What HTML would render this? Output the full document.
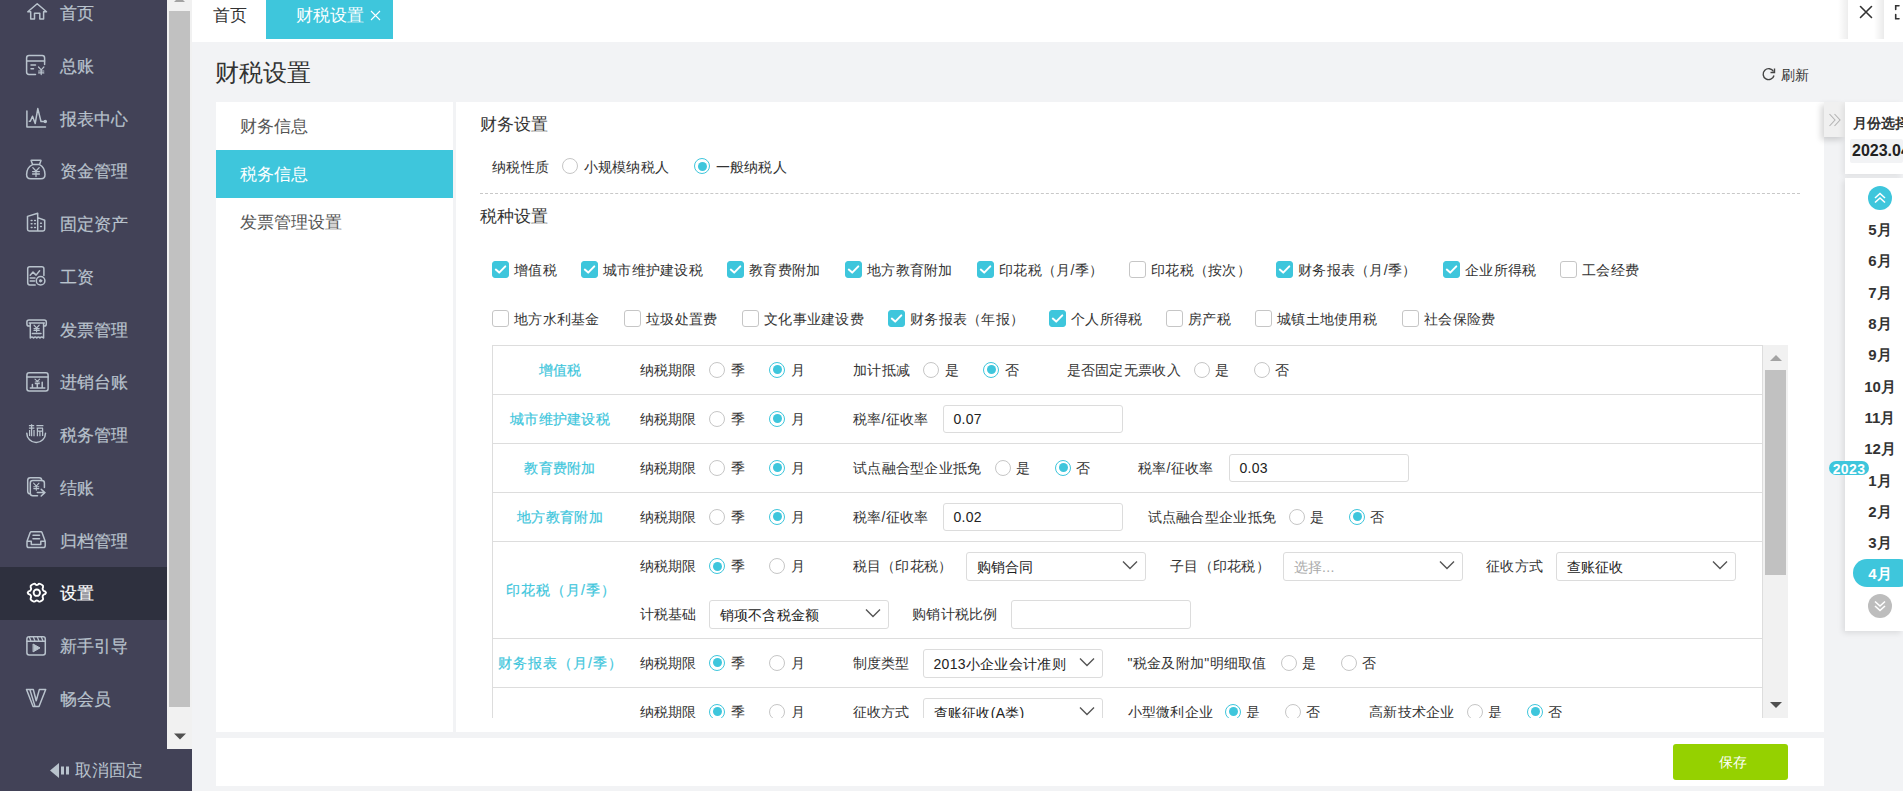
<!DOCTYPE html>
<html><head><meta charset="utf-8">
<style>
*{box-sizing:border-box;margin:0;padding:0}
html,body{width:1903px;height:791px;overflow:hidden;background:#f2f3f5;font-family:"Liberation Sans",sans-serif;color:#333}
.a{position:absolute}
.t{position:absolute;white-space:nowrap;line-height:20px}
.ls{letter-spacing:0.3px}
.sk{-webkit-text-stroke:0.2px currentColor}
#side{left:0;top:0;width:167px;height:791px;background:#424257;overflow:hidden}
.si{position:absolute;left:0;width:167px;height:53px}
.si .lb{position:absolute;left:60px;top:0;line-height:53px;font-size:17px;color:#b9c3cd;white-space:nowrap;-webkit-text-stroke:0.2px currentColor}
.si svg{position:absolute;left:26px;top:16px;width:21px;height:21px}
.si.on{background:#2e303e}
.si.on .lb{color:#fff}
.rd{position:absolute;width:16px;height:16px;border:1px solid #c6c6c6;border-radius:50%;background:#fff}
.rd.on{border-color:#3ec6dc}
.rd.on:after{content:"";position:absolute;left:2.5px;top:2.5px;width:9px;height:9px;border-radius:50%;background:#3ec6dc}
.cb{position:absolute;width:17px;height:17px;border:1px solid #c6c6c6;border-radius:3px;background:#fff}
.cb.on{background:#3ec6dc;border-color:#3ec6dc}
.cb svg{position:absolute;left:-1px;top:-1px}
.ib{position:absolute;border:1px solid #dcdcdc;border-radius:3px;background:#fff}
</style></head><body>
<div id="side" class="a">
<div class="si" style="top:-13.00px"><span class="lb">首页</span></div>
<div class="si" style="top:39.76px"><span class="lb">总账</span></div>
<div class="si" style="top:92.52px"><span class="lb">报表中心</span></div>
<div class="si" style="top:145.28px"><span class="lb">资金管理</span></div>
<div class="si" style="top:198.04px"><span class="lb">固定资产</span></div>
<div class="si" style="top:250.80px"><span class="lb">工资</span></div>
<div class="si" style="top:303.56px"><span class="lb">发票管理</span></div>
<div class="si" style="top:356.32px"><span class="lb">进销台账</span></div>
<div class="si" style="top:409.08px"><span class="lb">税务管理</span></div>
<div class="si" style="top:461.84px"><span class="lb">结账</span></div>
<div class="si" style="top:514.60px"><span class="lb">归档管理</span></div>
<div class="si on" style="top:567.36px"><span class="lb">设置</span></div>
<div class="si" style="top:620.12px"><span class="lb">新手引导</span></div>
<div class="si" style="top:672.88px"><span class="lb">畅会员</span></div>
</div>
<svg class="a" style="left:0;top:0" width="60" height="791" viewBox="0 0 60 791" fill="none" stroke="#b9c3cd" stroke-width="1.5" stroke-linejoin="round" stroke-linecap="round">
<!-- home -->
<path d="M37.2 3.8 L27.8 11.8 H30.7 V19 H34.5 V13.3 H39.8 V19 H43.6 V11.8 H46.5 Z"/>
<!-- ledger -->
<path d="M44.6 64.5 V58 Q44.6 55.6 42.2 55.6 H29 Q26.6 55.6 26.6 58 V72 Q26.6 74.4 29 74.4 H35.5"/>
<path d="M26.6 61 H44.6 M31 65 H35.5 M31 68.8 H33.5"/>
<path d="M38.5 67 L41.2 69.8 L43.9 67 M41.2 69.8 V74.6 M38.6 71 H43.8 M38.6 72.9 H43.8" stroke-width="1.2"/>
<!-- chart -->
<path d="M26.9 111 V126.9 H45.5"/>
<path d="M29.3 121.2 H30.3 L32.5 116.3 L35.2 123.5 L37.8 108.6 L41 121.5 H45"/>
<circle cx="45.3" cy="121.6" r="1" fill="#b9c3cd"/>
<!-- money bag -->
<path d="M32.6 164.6 L31.2 160.8 Q31 160.2 31.7 160.2 H40.4 Q41.1 160.2 40.9 160.8 L39.5 164.6 Q45 167.5 45 174.5 Q45 178.8 41 178.8 H30.6 Q26.6 178.8 26.6 174.5 Q26.6 167.5 32.6 164.6 Z M32.6 164.6 H39.5"/>
<path d="M32.8 167.6 L36 171 L39.2 167.6 M36 171 V176.6 M32.6 171.6 H39.4 M32.6 174 H39.4" stroke-width="1.3"/>
<!-- building -->
<path d="M37.7 213.2 L27.5 216.4 V229.3 Q27.5 231 29.2 231 H43 Q44.7 231 44.7 229.3 V220.2 L37.7 217.6 M37.7 213.2 V231"/>
<path d="M31.2 220.4 H32 M34.6 220.4 H35.4 M31.2 223.8 H32 M34.6 223.8 H35.4 M31.2 227.4 H32 M34.6 227.4 H35.4 M40.6 223.2 H41.4 M40.6 226.4 H41.4" stroke-width="1.5"/>
<!-- salary -->
<path d="M43.9 275.6 V268.8 Q43.9 266.7 41.8 266.7 H29.8 Q27.7 266.7 27.7 268.8 V282.8 Q27.7 284.9 29.8 284.9 H35.2"/>
<path d="M30.2 275.2 L33 272.1 L36.1 275.1 L39.6 270.8 M30.2 278 H35 M30.2 281 H34.5"/>
<circle cx="40.6" cy="280.8" r="4.3"/>
<circle cx="40.6" cy="280.8" r="1.2" fill="#b9c3cd" stroke-width="1"/>
<!-- invoice -->
<path d="M30.3 326 H29 Q26.9 326 26.9 323.9 V322 Q26.9 319.9 29 319.9 H44.2 Q46.3 319.9 46.3 322 V323.9 Q46.3 326 44.2 326 H43.6"/>
<path d="M29.3 323.1 H44.3 M30.3 323.1 V338 Q32 335.8 33.6 338 Q35.2 335.8 36.8 338 Q38.4 335.8 40 338 Q41.6 335.8 43.6 338 V323.1 M32.4 333.5 H41"/>
<path d="M34 325.2 L36.6 328 L39.2 325.2 M36.6 328 V331.8 M34 328.6 H39.2 M34 330.4 H39.2" stroke-width="1.2"/>
<!-- window chart -->
<rect x="26.9" y="372.7" width="21.2" height="18.2" rx="2.2"/>
<path d="M26.9 377 H48.1 M30.3 387.9 H44.8 M32.4 384.6 V387.9 M37.3 384 V387.9 M42.2 382.2 V387.9"/>
<path d="M35 379.2 L37.3 381.4 L39.6 379.2 M35.2 382 H39.4 M35.2 383.6 H39.4" stroke-width="1.1"/>
<!-- tax bowl -->
<path d="M26.8 433.2 A9.35 9.35 0 0 0 45.5 433.2"/>
<path d="M28.9 425.6 H34.2 M36.4 425.6 H43.4 M28.9 428.2 H34.4 M36.6 428.2 H43 M31.6 424.3 V436.3 M29.6 430 V436 M34 430 V436.3 M37.4 428.2 V436.3 M39.9 430.6 V436.3 M42.6 428.2 V436 M37.4 431 H42.6" stroke-width="1.25" stroke-linecap="butt"/>
<!-- checkout -->
<path d="M30.3 493.8 Q27.7 493.8 27.7 491.2 V480.3 Q27.7 477.7 30.3 477.7 H39.2 Q41.7 477.7 41.7 480.4"/>
<path d="M44.4 487.6 V483 Q44.4 480.5 41.9 480.5 H32.8 Q30.3 480.5 30.3 483 V493.2 Q30.3 495.7 32.8 495.7 H37.5"/>
<path d="M37.3 492.6 H45 M41.2 489.2 L44.8 492.6 L41.2 496"/>
<path d="M33.6 483.2 L36.3 486.2 L39 483.2 M36.3 486.2 V490.2 M33.8 486.8 H38.8 M33.8 488.6 H38.8" stroke-width="1.1"/>
<!-- inbox -->
<path d="M31.4 531.8 H41 Q41.7 531.8 42 532.5 L45.2 541.3 V545.8 Q45.2 547.6 43.4 547.6 H28.8 Q27 547.6 27 545.8 V541.3 L30.2 532.5 Q30.6 531.8 31.4 531.8 Z M27 541.3 H31.3 V544.5 H40.8 V541.3 H45.2 M33 535.2 H39.5 M33 538.8 H39.5"/>
<!-- gear (white) -->
<path d="M33.3 584 Q34.9 583.3 35.5 584.4 Q36.8 585.4 38.1 584.4 Q38.8 583.3 40.4 584 Q42.3 584.9 43 585.9 Q43.3 587.5 42.6 588.3 Q42.4 590 43.7 590.9 Q45.6 591.2 46 592.7 Q45.6 594.2 43.7 594.6 Q42.4 595.4 42.6 597.1 Q43.3 598 43 599.5 Q42.3 600.6 40.4 601.4 Q38.8 602 38.1 601 Q36.8 600 35.5 601 Q34.9 602 33.3 601.4 Q31.4 600.6 30.7 599.5 Q30.4 598 31.1 597.1 Q31.3 595.4 30 594.6 Q28 594.2 27.7 592.7 Q28 591.2 30 590.9 Q31.3 590 31.1 588.3 Q30.4 587.5 30.7 585.9 Q31.4 584.9 33.3 584 Z" stroke="#fff" stroke-width="1.9"/>
<circle cx="36.8" cy="592.7" r="3.2" stroke="#fff" stroke-width="1.9"/>
<!-- clapper -->
<rect x="26.9" y="636.7" width="18.4" height="18.2" rx="2.2"/>
<path d="M26.9 641.2 H45.3"/>
<path d="M29.5 637.5 L30.8 640.5 M33.5 637.5 L34.8 640.5 M37.5 637.5 L38.8 640.5 M41.5 637.5 L42.8 640.5" stroke-width="1.3"/>
<path d="M33.4 644.2 L40 647.9 L33.4 651.7 Z" fill="#b9c3cd" stroke-width="1"/>
<!-- V -->
<path d="M26.5 689.4 H33.3 L36.2 700.8 L39.4 689.4 H45.7 L39 706.4 H33.1 Z M29.8 689.4 L34.8 705.6"/>
</svg>
<div class="a" style="left:167px;top:0px;width:25px;height:749px;background:#f1f1f1;"></div>
<div class="a" style="left:169px;top:11px;width:21px;height:696px;background:#c1c1c1;"></div>
<svg class="a" style="left:173px;top:-4px" width="14" height="6" viewBox="0 0 14 6"><path d="M1 6 L6.5 0.5 L12 6 Z" fill="#a3a3a3"/></svg>
<svg class="a" style="left:173.5px;top:733px" width="12" height="7" viewBox="0 0 12 7"><path d="M0 0.5 L6 6.5 L12 0.5 Z" fill="#505050"/></svg>
<div class="a" style="left:0px;top:749px;width:192px;height:42px;background:#424257;"></div>
<svg class="a" style="left:49px;top:762px" width="24" height="17" viewBox="0 0 24 17"><path d="M1 8.5 L10 1 V16 Z" fill="#b9c3cd"/><rect x="12" y="4.5" width="3" height="8" fill="#b9c3cd"/><rect x="17" y="4.5" width="3" height="8" fill="#b9c3cd"/></svg>
<div class="t" style="left:74.5px;top:761.0px;font-size:17px;line-height:20px;color:#b9c3cd;font-weight:normal;">取消固定</div>
<div class="a" style="left:192px;top:0px;width:1711px;height:42px;background:#fff;"></div>
<div class="t" style="left:213px;top:6.0px;font-size:17px;line-height:20px;color:#333;font-weight:normal;">首页</div>
<div class="a" style="left:266px;top:0px;width:127px;height:39px;background:#3ec6dc;"></div>
<div class="t" style="left:296px;top:6.0px;font-size:17px;line-height:20px;color:#fff;font-weight:normal;">财税设置</div>
<svg class="a" style="left:369.5px;top:10px" width="11" height="11" viewBox="0 0 11 11"><path d="M1 1 L10 10 M10 1 L1 10" stroke="#fff" stroke-width="1.1"/></svg>
<div class="a" style="left:1838px;top:0px;width:10px;height:39px;background:linear-gradient(to right, rgba(0,0,0,0), rgba(0,0,0,0.07));"></div>
<div class="a" style="left:1874px;top:0px;width:10px;height:39px;background:linear-gradient(to right, rgba(0,0,0,0), rgba(0,0,0,0.08));"></div>
<svg class="a" style="left:1859px;top:5px" width="14" height="14" viewBox="0 0 14 14"><path d="M1.5 1.5 L12.5 12.5 M12.5 1.5 L1.5 12.5" stroke="#333" stroke-width="1.6" stroke-linecap="round"/></svg>
<svg class="a" style="left:1893px;top:4px" width="10" height="17" viewBox="0 0 10 17"><path d="M6 1.7 H2.7 V5.5 M2.7 10.5 V14.8 H6" fill="none" stroke="#333" stroke-width="1.6" stroke-linecap="round"/></svg>
<div class="t" style="left:215px;top:57.5px;font-size:24px;line-height:30px;color:#333;font-weight:normal;">财税设置</div>
<svg class="a" style="left:1761px;top:67px" width="15" height="15" viewBox="0 0 15 15"><path d="M12.5 4.5 A5.5 5.5 0 1 0 13 8.5" fill="none" stroke="#444" stroke-width="1.4"/><path d="M13.5 1.5 V5.5 H9.5" fill="none" stroke="#444" stroke-width="1.4"/></svg>
<div class="t ls" style="left:1781px;top:64.5px;font-size:14px;line-height:20px;color:#333;font-weight:normal;">刷新</div>
<div class="a" style="left:216px;top:102px;width:237px;height:630px;background:#fff;"></div>
<div class="a" style="left:216px;top:150px;width:237px;height:48px;background:#3ec6dc;"></div>
<div class="t" style="left:240px;top:117.0px;font-size:17px;line-height:20px;color:#555;font-weight:normal;">财务信息</div>
<div class="t" style="left:240px;top:165.0px;font-size:17px;line-height:20px;color:#fff;font-weight:normal;">税务信息</div>
<div class="t" style="left:240px;top:213.0px;font-size:17px;line-height:20px;color:#555;font-weight:normal;">发票管理设置</div>
<div class="a" style="left:456px;top:102px;width:1368px;height:630px;background:#fff;"></div>
<div class="t" style="left:480px;top:114.5px;font-size:17px;line-height:20px;color:#333;font-weight:normal;">财务设置</div>
<div class="t ls" style="left:492px;top:157.0px;font-size:14px;line-height:20px;color:#333;font-weight:normal;">纳税性质</div>
<div class="rd" style="left:562px;top:158.0px"></div>
<div class="t ls" style="left:583.5px;top:156.5px;font-size:14px;line-height:20px;color:#333;font-weight:normal;">小规模纳税人</div>
<div class="rd on" style="left:694px;top:158.0px"></div>
<div class="t ls" style="left:715.5px;top:156.5px;font-size:14px;line-height:20px;color:#333;font-weight:normal;">一般纳税人</div>
<div class="a" style="left:480px;top:193px;width:1320px;height:0;border-top:1px dashed #c8c8c8"></div>
<div class="t" style="left:480px;top:206.5px;font-size:17px;line-height:20px;color:#333;font-weight:normal;">税种设置</div>
<div class="cb on" style="left:492px;top:261px"><svg width="17" height="17" viewBox="0 0 17 17"><path d="M3.8 8.6 L7.2 11.6 L13.3 5.4" fill="none" stroke="#fff" stroke-width="2" stroke-linecap="round" stroke-linejoin="round"/></svg></div>
<div class="t ls" style="left:514px;top:259.5px;font-size:14px;line-height:20px;color:#333;font-weight:normal;">增值税</div>
<div class="cb on" style="left:581px;top:261px"><svg width="17" height="17" viewBox="0 0 17 17"><path d="M3.8 8.6 L7.2 11.6 L13.3 5.4" fill="none" stroke="#fff" stroke-width="2" stroke-linecap="round" stroke-linejoin="round"/></svg></div>
<div class="t ls" style="left:603px;top:259.5px;font-size:14px;line-height:20px;color:#333;font-weight:normal;">城市维护建设税</div>
<div class="cb on" style="left:727px;top:261px"><svg width="17" height="17" viewBox="0 0 17 17"><path d="M3.8 8.6 L7.2 11.6 L13.3 5.4" fill="none" stroke="#fff" stroke-width="2" stroke-linecap="round" stroke-linejoin="round"/></svg></div>
<div class="t ls" style="left:749px;top:259.5px;font-size:14px;line-height:20px;color:#333;font-weight:normal;">教育费附加</div>
<div class="cb on" style="left:845px;top:261px"><svg width="17" height="17" viewBox="0 0 17 17"><path d="M3.8 8.6 L7.2 11.6 L13.3 5.4" fill="none" stroke="#fff" stroke-width="2" stroke-linecap="round" stroke-linejoin="round"/></svg></div>
<div class="t ls" style="left:867px;top:259.5px;font-size:14px;line-height:20px;color:#333;font-weight:normal;">地方教育附加</div>
<div class="cb on" style="left:977px;top:261px"><svg width="17" height="17" viewBox="0 0 17 17"><path d="M3.8 8.6 L7.2 11.6 L13.3 5.4" fill="none" stroke="#fff" stroke-width="2" stroke-linecap="round" stroke-linejoin="round"/></svg></div>
<div class="t ls" style="left:999px;top:259.5px;font-size:14px;line-height:20px;color:#333;font-weight:normal;">印花税（月/季）</div>
<div class="cb" style="left:1129px;top:261px"></div>
<div class="t ls" style="left:1151px;top:259.5px;font-size:14px;line-height:20px;color:#333;font-weight:normal;">印花税（按次）</div>
<div class="cb on" style="left:1276px;top:261px"><svg width="17" height="17" viewBox="0 0 17 17"><path d="M3.8 8.6 L7.2 11.6 L13.3 5.4" fill="none" stroke="#fff" stroke-width="2" stroke-linecap="round" stroke-linejoin="round"/></svg></div>
<div class="t ls" style="left:1298px;top:259.5px;font-size:14px;line-height:20px;color:#333;font-weight:normal;">财务报表（月/季）</div>
<div class="cb on" style="left:1443px;top:261px"><svg width="17" height="17" viewBox="0 0 17 17"><path d="M3.8 8.6 L7.2 11.6 L13.3 5.4" fill="none" stroke="#fff" stroke-width="2" stroke-linecap="round" stroke-linejoin="round"/></svg></div>
<div class="t ls" style="left:1465px;top:259.5px;font-size:14px;line-height:20px;color:#333;font-weight:normal;">企业所得税</div>
<div class="cb" style="left:1560px;top:261px"></div>
<div class="t ls" style="left:1582px;top:259.5px;font-size:14px;line-height:20px;color:#333;font-weight:normal;">工会经费</div>
<div class="cb" style="left:492px;top:310px"></div>
<div class="t ls" style="left:514px;top:308.5px;font-size:14px;line-height:20px;color:#333;font-weight:normal;">地方水利基金</div>
<div class="cb" style="left:624px;top:310px"></div>
<div class="t ls" style="left:646px;top:308.5px;font-size:14px;line-height:20px;color:#333;font-weight:normal;">垃圾处置费</div>
<div class="cb" style="left:742px;top:310px"></div>
<div class="t ls" style="left:764px;top:308.5px;font-size:14px;line-height:20px;color:#333;font-weight:normal;">文化事业建设费</div>
<div class="cb on" style="left:888px;top:310px"><svg width="17" height="17" viewBox="0 0 17 17"><path d="M3.8 8.6 L7.2 11.6 L13.3 5.4" fill="none" stroke="#fff" stroke-width="2" stroke-linecap="round" stroke-linejoin="round"/></svg></div>
<div class="t ls" style="left:910px;top:308.5px;font-size:14px;line-height:20px;color:#333;font-weight:normal;">财务报表（年报）</div>
<div class="cb on" style="left:1049px;top:310px"><svg width="17" height="17" viewBox="0 0 17 17"><path d="M3.8 8.6 L7.2 11.6 L13.3 5.4" fill="none" stroke="#fff" stroke-width="2" stroke-linecap="round" stroke-linejoin="round"/></svg></div>
<div class="t ls" style="left:1071px;top:308.5px;font-size:14px;line-height:20px;color:#333;font-weight:normal;">个人所得税</div>
<div class="cb" style="left:1166px;top:310px"></div>
<div class="t ls" style="left:1188px;top:308.5px;font-size:14px;line-height:20px;color:#333;font-weight:normal;">房产税</div>
<div class="cb" style="left:1255px;top:310px"></div>
<div class="t ls" style="left:1277px;top:308.5px;font-size:14px;line-height:20px;color:#333;font-weight:normal;">城镇土地使用税</div>
<div class="cb" style="left:1402px;top:310px"></div>
<div class="t ls" style="left:1424px;top:308.5px;font-size:14px;line-height:20px;color:#333;font-weight:normal;">社会保险费</div>
<div class="a" style="left:492px;top:345px;width:1296px;height:373px;overflow:hidden">
<div class="a" style="left:0;top:0;width:1271px;height:400px;border:1px solid #ddd;border-bottom:none"></div>
<div class="a" style="left:0;top:49px;width:1271px;height:1px;background:#ddd"></div>
<div class="a" style="left:0;top:98px;width:1271px;height:1px;background:#ddd"></div>
<div class="a" style="left:0;top:147px;width:1271px;height:1px;background:#ddd"></div>
<div class="a" style="left:0;top:196px;width:1271px;height:1px;background:#ddd"></div>
<div class="a" style="left:0;top:293px;width:1271px;height:1px;background:#ddd"></div>
<div class="a" style="left:0;top:342px;width:1271px;height:1px;background:#ddd"></div>
<div class="t ls sk" style="left:-82.0px;width:300px;text-align:center;top:14.5px;font-size:14px;line-height:20px;color:#3ec6dc;font-weight:normal;">增值税</div>
<div class="t ls" style="left:147.5px;top:14.5px;font-size:14px;line-height:20px;color:#333;font-weight:normal;">纳税期限</div>
<div class="rd" style="left:217px;top:16.5px"></div>
<div class="t ls" style="left:238.5px;top:14.5px;font-size:14px;line-height:20px;color:#333;font-weight:normal;">季</div>
<div class="rd on" style="left:277px;top:16.5px"></div>
<div class="t ls" style="left:298.5px;top:14.5px;font-size:14px;line-height:20px;color:#333;font-weight:normal;">月</div>
<div class="t ls" style="left:361px;top:14.5px;font-size:14px;line-height:20px;color:#333;font-weight:normal;">加计抵减</div>
<div class="rd" style="left:431px;top:16.5px"></div>
<div class="t ls" style="left:452.5px;top:14.5px;font-size:14px;line-height:20px;color:#333;font-weight:normal;">是</div>
<div class="rd on" style="left:491px;top:16.5px"></div>
<div class="t ls" style="left:512.5px;top:14.5px;font-size:14px;line-height:20px;color:#333;font-weight:normal;">否</div>
<div class="t ls" style="left:574.5px;top:14.5px;font-size:14px;line-height:20px;color:#333;font-weight:normal;">是否固定无票收入</div>
<div class="rd" style="left:702px;top:16.5px"></div>
<div class="t ls" style="left:723px;top:14.5px;font-size:14px;line-height:20px;color:#333;font-weight:normal;">是</div>
<div class="rd" style="left:762px;top:16.5px"></div>
<div class="t ls" style="left:783px;top:14.5px;font-size:14px;line-height:20px;color:#333;font-weight:normal;">否</div>
<div class="t ls sk" style="left:-82.0px;width:300px;text-align:center;top:63.5px;font-size:14px;line-height:20px;color:#3ec6dc;font-weight:normal;">城市维护建设税</div>
<div class="t ls" style="left:147.5px;top:63.5px;font-size:14px;line-height:20px;color:#333;font-weight:normal;">纳税期限</div>
<div class="rd" style="left:217px;top:65.5px"></div>
<div class="t ls" style="left:238.5px;top:63.5px;font-size:14px;line-height:20px;color:#333;font-weight:normal;">季</div>
<div class="rd on" style="left:277px;top:65.5px"></div>
<div class="t ls" style="left:298.5px;top:63.5px;font-size:14px;line-height:20px;color:#333;font-weight:normal;">月</div>
<div class="t ls" style="left:361px;top:63.5px;font-size:14px;line-height:20px;color:#333;font-weight:normal;">税率/征收率</div>
<div class="ib" style="left:451px;top:60px;width:180px;height:28px"></div>
<div class="t ls" style="left:461.5px;top:64.0px;font-size:14px;line-height:20px;color:#222;font-weight:normal;">0.07</div>
<div class="t ls sk" style="left:-82.0px;width:300px;text-align:center;top:112.5px;font-size:14px;line-height:20px;color:#3ec6dc;font-weight:normal;">教育费附加</div>
<div class="t ls" style="left:147.5px;top:112.5px;font-size:14px;line-height:20px;color:#333;font-weight:normal;">纳税期限</div>
<div class="rd" style="left:217px;top:114.5px"></div>
<div class="t ls" style="left:238.5px;top:112.5px;font-size:14px;line-height:20px;color:#333;font-weight:normal;">季</div>
<div class="rd on" style="left:277px;top:114.5px"></div>
<div class="t ls" style="left:298.5px;top:112.5px;font-size:14px;line-height:20px;color:#333;font-weight:normal;">月</div>
<div class="t ls" style="left:361px;top:112.5px;font-size:14px;line-height:20px;color:#333;font-weight:normal;">试点融合型企业抵免</div>
<div class="rd" style="left:503px;top:114.5px"></div>
<div class="t ls" style="left:524px;top:112.5px;font-size:14px;line-height:20px;color:#333;font-weight:normal;">是</div>
<div class="rd on" style="left:563px;top:114.5px"></div>
<div class="t ls" style="left:584px;top:112.5px;font-size:14px;line-height:20px;color:#333;font-weight:normal;">否</div>
<div class="t ls" style="left:646px;top:112.5px;font-size:14px;line-height:20px;color:#333;font-weight:normal;">税率/征收率</div>
<div class="ib" style="left:737px;top:109px;width:180px;height:28px"></div>
<div class="t ls" style="left:747.5px;top:113.0px;font-size:14px;line-height:20px;color:#222;font-weight:normal;">0.03</div>
<div class="t ls sk" style="left:-82.0px;width:300px;text-align:center;top:161.5px;font-size:14px;line-height:20px;color:#3ec6dc;font-weight:normal;">地方教育附加</div>
<div class="t ls" style="left:147.5px;top:161.5px;font-size:14px;line-height:20px;color:#333;font-weight:normal;">纳税期限</div>
<div class="rd" style="left:217px;top:163.5px"></div>
<div class="t ls" style="left:238.5px;top:161.5px;font-size:14px;line-height:20px;color:#333;font-weight:normal;">季</div>
<div class="rd on" style="left:277px;top:163.5px"></div>
<div class="t ls" style="left:298.5px;top:161.5px;font-size:14px;line-height:20px;color:#333;font-weight:normal;">月</div>
<div class="t ls" style="left:361px;top:161.5px;font-size:14px;line-height:20px;color:#333;font-weight:normal;">税率/征收率</div>
<div class="ib" style="left:451px;top:158px;width:180px;height:28px"></div>
<div class="t ls" style="left:461.5px;top:162.0px;font-size:14px;line-height:20px;color:#222;font-weight:normal;">0.02</div>
<div class="t ls" style="left:655.5px;top:161.5px;font-size:14px;line-height:20px;color:#333;font-weight:normal;">试点融合型企业抵免</div>
<div class="rd" style="left:797px;top:163.5px"></div>
<div class="t ls" style="left:818px;top:161.5px;font-size:14px;line-height:20px;color:#333;font-weight:normal;">是</div>
<div class="rd on" style="left:857px;top:163.5px"></div>
<div class="t ls" style="left:878px;top:161.5px;font-size:14px;line-height:20px;color:#333;font-weight:normal;">否</div>
<div class="t ls sk" style="left:-81.0px;width:300px;text-align:center;top:235.0px;font-size:14px;line-height:20px;color:#3ec6dc;font-weight:normal;letter-spacing:1px;">印花税（月/季）</div>
<div class="t ls" style="left:147.5px;top:211.0px;font-size:14px;line-height:20px;color:#333;font-weight:normal;">纳税期限</div>
<div class="rd on" style="left:217px;top:213.0px"></div>
<div class="t ls" style="left:238.5px;top:211.0px;font-size:14px;line-height:20px;color:#333;font-weight:normal;">季</div>
<div class="rd" style="left:277px;top:213.0px"></div>
<div class="t ls" style="left:298.5px;top:211.0px;font-size:14px;line-height:20px;color:#333;font-weight:normal;">月</div>
<div class="t ls" style="left:360.5px;top:211.0px;font-size:14px;line-height:20px;color:#333;font-weight:normal;">税目（印花税）</div>
<div class="ib" style="left:474px;top:207px;width:180px;height:29px"></div>
<div class="t ls" style="left:484.5px;top:211.5px;font-size:14px;line-height:20px;color:#222;font-weight:normal;">购销合同</div>
<svg class="a" style="left:630px;top:214.5px" width="16" height="10" viewBox="0 0 16 10"><path d="M1 1.5 L8 8.5 L15 1.5" fill="none" stroke="#555" stroke-width="1.4"/></svg>
<div class="t ls" style="left:678px;top:211.0px;font-size:14px;line-height:20px;color:#333;font-weight:normal;">子目（印花税）</div>
<div class="ib" style="left:791px;top:207px;width:180px;height:29px"></div>
<div class="t ls" style="left:801.5px;top:211.5px;font-size:14px;line-height:20px;color:#aaa;font-weight:normal;">选择...</div>
<svg class="a" style="left:947px;top:214.5px" width="16" height="10" viewBox="0 0 16 10"><path d="M1 1.5 L8 8.5 L15 1.5" fill="none" stroke="#555" stroke-width="1.4"/></svg>
<div class="t ls" style="left:994px;top:211.0px;font-size:14px;line-height:20px;color:#333;font-weight:normal;">征收方式</div>
<div class="ib" style="left:1064px;top:207px;width:180px;height:29px"></div>
<div class="t ls" style="left:1074.5px;top:211.5px;font-size:14px;line-height:20px;color:#222;font-weight:normal;">查账征收</div>
<svg class="a" style="left:1220px;top:214.5px" width="16" height="10" viewBox="0 0 16 10"><path d="M1 1.5 L8 8.5 L15 1.5" fill="none" stroke="#555" stroke-width="1.4"/></svg>
<div class="t ls" style="left:147.5px;top:259.0px;font-size:14px;line-height:20px;color:#333;font-weight:normal;">计税基础</div>
<div class="ib" style="left:217px;top:255px;width:180px;height:29px"></div>
<div class="t ls" style="left:227.5px;top:259.5px;font-size:14px;line-height:20px;color:#222;font-weight:normal;">销项不含税金额</div>
<svg class="a" style="left:373px;top:262.5px" width="16" height="10" viewBox="0 0 16 10"><path d="M1 1.5 L8 8.5 L15 1.5" fill="none" stroke="#555" stroke-width="1.4"/></svg>
<div class="t ls" style="left:420px;top:259.0px;font-size:14px;line-height:20px;color:#333;font-weight:normal;">购销计税比例</div>
<div class="ib" style="left:519px;top:255px;width:180px;height:29px"></div>
<div class="t ls sk" style="left:-81.5px;width:300px;text-align:center;top:307.5px;font-size:14px;line-height:20px;color:#3ec6dc;font-weight:normal;letter-spacing:1px;">财务报表（月/季）</div>
<div class="t ls" style="left:147.5px;top:307.5px;font-size:14px;line-height:20px;color:#333;font-weight:normal;">纳税期限</div>
<div class="rd on" style="left:217px;top:309.5px"></div>
<div class="t ls" style="left:238.5px;top:307.5px;font-size:14px;line-height:20px;color:#333;font-weight:normal;">季</div>
<div class="rd" style="left:277px;top:309.5px"></div>
<div class="t ls" style="left:298.5px;top:307.5px;font-size:14px;line-height:20px;color:#333;font-weight:normal;">月</div>
<div class="t ls" style="left:360.5px;top:307.5px;font-size:14px;line-height:20px;color:#333;font-weight:normal;">制度类型</div>
<div class="ib" style="left:431px;top:304px;width:180px;height:29px"></div>
<div class="t ls" style="left:441.5px;top:308.5px;font-size:14px;line-height:20px;color:#222;font-weight:normal;">2013小企业会计准则</div>
<svg class="a" style="left:587px;top:311.5px" width="16" height="10" viewBox="0 0 16 10"><path d="M1 1.5 L8 8.5 L15 1.5" fill="none" stroke="#555" stroke-width="1.4"/></svg>
<div class="t ls" style="left:635.5px;top:307.5px;font-size:14px;line-height:20px;color:#333;font-weight:normal;">"税金及附加"明细取值</div>
<div class="rd" style="left:789px;top:309.5px"></div>
<div class="t ls" style="left:810px;top:307.5px;font-size:14px;line-height:20px;color:#333;font-weight:normal;">是</div>
<div class="rd" style="left:849px;top:309.5px"></div>
<div class="t ls" style="left:870px;top:307.5px;font-size:14px;line-height:20px;color:#333;font-weight:normal;">否</div>
<div class="t ls" style="left:147.5px;top:356.5px;font-size:14px;line-height:20px;color:#333;font-weight:normal;">纳税期限</div>
<div class="rd on" style="left:217px;top:358.5px"></div>
<div class="t ls" style="left:238.5px;top:356.5px;font-size:14px;line-height:20px;color:#333;font-weight:normal;">季</div>
<div class="rd" style="left:277px;top:358.5px"></div>
<div class="t ls" style="left:298.5px;top:356.5px;font-size:14px;line-height:20px;color:#333;font-weight:normal;">月</div>
<div class="t ls" style="left:360.5px;top:356.5px;font-size:14px;line-height:20px;color:#333;font-weight:normal;">征收方式</div>
<div class="ib" style="left:431px;top:353px;width:180px;height:29px"></div>
<div class="t ls" style="left:441.5px;top:357.5px;font-size:14px;line-height:20px;color:#222;font-weight:normal;">查账征收(A类)</div>
<svg class="a" style="left:587px;top:360.5px" width="16" height="10" viewBox="0 0 16 10"><path d="M1 1.5 L8 8.5 L15 1.5" fill="none" stroke="#555" stroke-width="1.4"/></svg>
<div class="t ls" style="left:635.5px;top:356.5px;font-size:14px;line-height:20px;color:#333;font-weight:normal;">小型微利企业</div>
<div class="rd on" style="left:733px;top:358.5px"></div>
<div class="t ls" style="left:754px;top:356.5px;font-size:14px;line-height:20px;color:#333;font-weight:normal;">是</div>
<div class="rd" style="left:793px;top:358.5px"></div>
<div class="t ls" style="left:814px;top:356.5px;font-size:14px;line-height:20px;color:#333;font-weight:normal;">否</div>
<div class="t ls" style="left:877px;top:356.5px;font-size:14px;line-height:20px;color:#333;font-weight:normal;">高新技术企业</div>
<div class="rd" style="left:975px;top:358.5px"></div>
<div class="t ls" style="left:996px;top:356.5px;font-size:14px;line-height:20px;color:#333;font-weight:normal;">是</div>
<div class="rd on" style="left:1035px;top:358.5px"></div>
<div class="t ls" style="left:1056px;top:356.5px;font-size:14px;line-height:20px;color:#333;font-weight:normal;">否</div>
<div class="a" style="left:1271px;top:0;width:25px;height:373px;background:#f1f1f1"></div>
<div class="a" style="left:1273px;top:25px;width:21px;height:205px;background:#c1c1c1"></div>
<svg class="a" style="left:1277px;top:9px" width="14" height="8" viewBox="0 0 14 8"><path d="M1 7 L7 1 L13 7 Z" fill="#a3a3a3"/></svg>
<svg class="a" style="left:1277px;top:356px" width="14" height="8" viewBox="0 0 14 8"><path d="M1 1 L7 7 L13 1 Z" fill="#505050"/></svg>
</div>
<div class="a" style="left:216px;top:738px;width:1608px;height:48px;background:#fff;"></div>
<div class="a" style="left:1673px;top:744px;width:115px;height:36px;background:#95d100;border-radius:3px"></div>
<div class="t ls" style="left:1583.0px;width:300px;text-align:center;top:752.0px;font-size:14px;line-height:20px;color:#fff;font-weight:normal;">保存</div>
<div class="a" style="left:1824px;top:102px;width:79px;height:689px;background:#f2f3f5;"></div>
<div class="a" style="left:1824px;top:102px;width:21px;height:35px;background:#f0f0f0;box-shadow:-3px 3px 6px rgba(0,0,0,0.16)"></div>
<svg class="a" style="left:1828px;top:113px" width="14" height="14" viewBox="0 0 14 14"><path d="M1.5 1 L7 7 L1.5 13 M6.5 1 L12 7 L6.5 13" fill="none" stroke="#b4b4b4" stroke-width="1.1"/></svg>
<div class="a" style="left:1845px;top:102px;width:58px;height:72px;background:#fff;box-shadow:-2px 2px 6px rgba(0,0,0,0.08)"></div>
<div class="t" style="left:1853px;top:113.0px;font-size:14px;line-height:20px;color:#333;font-weight:bold;">月份选择</div>
<div class="a" style="left:1850px;top:139px;width:53px;height:24px;background:#f2f3f5;border-radius:2px"></div>
<div class="t" style="left:1852px;top:140.5px;font-size:16px;line-height:20px;color:#222;font-weight:bold;">2023.04</div>
<div class="a" style="left:1845px;top:178px;width:58px;height:453px;background:#fff;box-shadow:-2px 2px 6px rgba(0,0,0,0.10)"></div>
<div class="a" style="left:1868px;top:186px;width:24px;height:24px;border-radius:50%;background:#3ec6dc"></div>
<svg class="a" style="left:1872px;top:190px" width="16" height="16" viewBox="0 0 16 16"><path d="M3 8 L8 3.5 L13 8 M3 12.5 L8 8 L13 12.5" fill="none" stroke="#fff" stroke-width="1.6"/></svg>
<div class="t" style="left:1855.0px;width:50px;text-align:center;top:219.8px;font-size:15px;line-height:20px;color:#333;font-weight:bold;">5月</div>
<div class="t" style="left:1855.0px;width:50px;text-align:center;top:251.1px;font-size:15px;line-height:20px;color:#333;font-weight:bold;">6月</div>
<div class="t" style="left:1855.0px;width:50px;text-align:center;top:282.5px;font-size:15px;line-height:20px;color:#333;font-weight:bold;">7月</div>
<div class="t" style="left:1855.0px;width:50px;text-align:center;top:313.8px;font-size:15px;line-height:20px;color:#333;font-weight:bold;">8月</div>
<div class="t" style="left:1855.0px;width:50px;text-align:center;top:345.2px;font-size:15px;line-height:20px;color:#333;font-weight:bold;">9月</div>
<div class="t" style="left:1855.0px;width:50px;text-align:center;top:376.5px;font-size:15px;line-height:20px;color:#333;font-weight:bold;">10月</div>
<div class="t" style="left:1855.0px;width:50px;text-align:center;top:407.8px;font-size:15px;line-height:20px;color:#333;font-weight:bold;">11月</div>
<div class="t" style="left:1855.0px;width:50px;text-align:center;top:439.2px;font-size:15px;line-height:20px;color:#333;font-weight:bold;">12月</div>
<div class="t" style="left:1855.0px;width:50px;text-align:center;top:470.5px;font-size:15px;line-height:20px;color:#333;font-weight:bold;">1月</div>
<div class="t" style="left:1855.0px;width:50px;text-align:center;top:501.9px;font-size:15px;line-height:20px;color:#333;font-weight:bold;">2月</div>
<div class="t" style="left:1855.0px;width:50px;text-align:center;top:533.2px;font-size:15px;line-height:20px;color:#333;font-weight:bold;">3月</div>
<div class="a" style="left:1853px;top:559px;width:60px;height:28px;border-radius:14px;background:#3ec6dc"></div>
<div class="t" style="left:1855.0px;width:50px;text-align:center;top:563.5px;font-size:15px;line-height:20px;color:#fff;font-weight:bold;">4月</div>
<div class="a" style="left:1868px;top:594px;width:24px;height:24px;border-radius:50%;background:#bdbdbd"></div>
<svg class="a" style="left:1872px;top:598px" width="16" height="16" viewBox="0 0 16 16"><path d="M3 3.5 L8 8 L13 3.5 M3 8 L8 12.5 L13 8" fill="none" stroke="#fff" stroke-width="1.6"/></svg>
<div class="a" style="left:1829px;top:461px;width:40px;height:14px;border-radius:7px;background:#3ec6dc"></div>
<div class="t" style="left:1824.0px;width:50px;text-align:center;top:461.5px;font-size:14px;line-height:14px;color:#fff;font-weight:bold;letter-spacing:0.4px;">2023</div>
</body></html>
